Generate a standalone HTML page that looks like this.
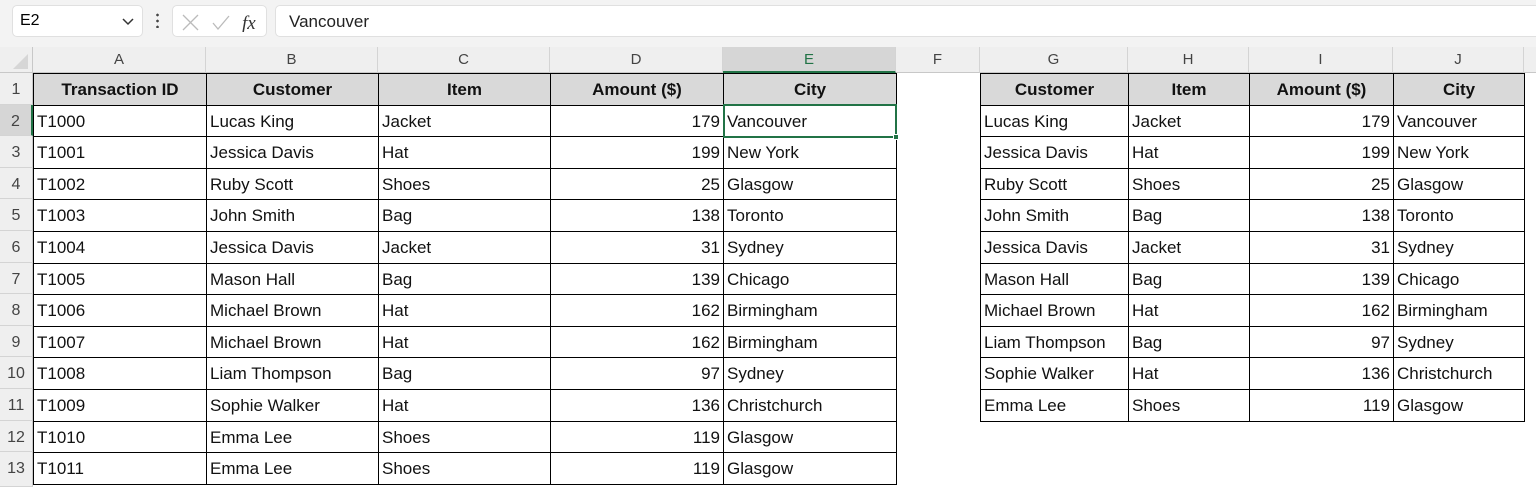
<!DOCTYPE html>
<html><head><meta charset="utf-8"><style>
*{margin:0;padding:0;box-sizing:border-box}
body{width:1536px;height:487px;overflow:hidden;background:#fff;font-family:"Liberation Sans",sans-serif;position:relative}
.top{position:absolute;left:0;top:0;width:1536px;height:47px;background:#f3f3f3}
.box{position:absolute;background:#fff;border:1px solid #e0e0e0;border-radius:5px}
.colh{position:absolute;top:47px;height:26px;background:#efefef;border-right:1px solid #d4d4d4;border-bottom:1px solid #c8c8c8;font-size:15px;color:#444;text-align:center;line-height:26px}
.rowh{position:absolute;left:0;width:33px;background:#efefef;border-bottom:1px solid #d4d4d4;border-right:1px solid #c8c8c8;font-size:16px;color:#444;text-align:center;padding-top:8px}
.t{position:absolute;top:73px;border-top:1px solid #000;border-left:1px solid #000}
.r{display:flex;height:31.6px}
.r div{border-right:1px solid #000;border-bottom:1px solid #000;font-size:17px;line-height:31px;padding:0 3px;white-space:nowrap;overflow:hidden;color:#111}
.r.h div{background:#d9d9d9;font-weight:bold;text-align:center}
.n{text-align:right}
</style></head><body>
<div class="top"></div>
<div class="box" style="left:12px;top:5px;width:131px;height:32px"><span style="position:absolute;left:7px;top:6px;font-size:16px">E2</span><svg style="position:absolute;left:109px;top:12px" width="12" height="8"><path d="M1 1l5 5 5-5" stroke="#333" fill="none" stroke-width="1.5"/></svg></div>
<div style="position:absolute;left:156px;top:12px;width:3px;height:16px;background:radial-gradient(circle,#444 1.2px,transparent 1.5px) 0 0/3px 6px"></div>
<div class="box" style="left:172px;top:5px;width:95px;height:32px"><svg style="position:absolute;left:8px;top:8px" width="80" height="18"><path d="M2 1l15 15M17 1L2 16" stroke="#bbb" stroke-width="1.3"/><path d="M32 9l5 6 11-13" stroke="#bbb" fill="none" stroke-width="1.3"/><text x="61" y="15" font-family="Liberation Serif" font-style="italic" font-size="19" fill="#333">fx</text></svg></div>
<div class="box" style="left:275px;top:5px;width:1270px;height:32px"><span style="position:absolute;left:13px;top:6px;font-size:17px;color:#222">Vancouver</span></div>
<div style="position:absolute;left:0;top:47px;width:33px;height:26px;background:#efefef;border-right:1px solid #c8c8c8;border-bottom:1px solid #c8c8c8"><svg width="33" height="26"><path d="M28 7v15H13z" fill="#d6d6d6"/></svg></div>
<div class="colh" style="left:33px;width:173px">A</div>
<div class="colh" style="left:206px;width:172px">B</div>
<div class="colh" style="left:378px;width:172px">C</div>
<div class="colh" style="left:550px;width:173px">D</div>
<div class="colh" style="left:723px;width:173px;background:#d6d6d6;color:#217346;border-bottom:2px solid #217346">E</div>
<div class="colh" style="left:896px;width:84px">F</div>
<div class="colh" style="left:980px;width:148px">G</div>
<div class="colh" style="left:1128px;width:121px">H</div>
<div class="colh" style="left:1249px;width:144px">I</div>
<div class="colh" style="left:1393px;width:131px">J</div>
<div class="colh" style="left:1524px;width:20px"></div>
<div class="rowh" style="top:73px;height:31.6px">1</div>
<div class="rowh" style="top:104.6px;height:31.6px;background:#d6d6d6;border-right:2px solid #217346">2</div>
<div class="rowh" style="top:136.2px;height:31.6px">3</div>
<div class="rowh" style="top:167.8px;height:31.6px">4</div>
<div class="rowh" style="top:199.4px;height:31.6px">5</div>
<div class="rowh" style="top:231px;height:31.6px">6</div>
<div class="rowh" style="top:262.6px;height:31.6px">7</div>
<div class="rowh" style="top:294.2px;height:31.6px">8</div>
<div class="rowh" style="top:325.8px;height:31.6px">9</div>
<div class="rowh" style="top:357.4px;height:31.6px">10</div>
<div class="rowh" style="top:389px;height:31.6px">11</div>
<div class="rowh" style="top:420.6px;height:31.6px">12</div>
<div class="rowh" style="top:452.2px;height:35px">13</div>

<div class="t" style="left:33px">
<div class="r h"><div style="width:173px">Transaction ID</div><div style="width:172px">Customer</div><div style="width:172px">Item</div><div style="width:173px">Amount ($)</div><div style="width:173px">City</div></div>
<div class="r"><div style="width:173px">T1000</div><div style="width:172px">Lucas King</div><div style="width:172px">Jacket</div><div class="n" style="width:173px">179</div><div style="width:173px">Vancouver</div></div>
<div class="r"><div style="width:173px">T1001</div><div style="width:172px">Jessica Davis</div><div style="width:172px">Hat</div><div class="n" style="width:173px">199</div><div style="width:173px">New York</div></div>
<div class="r"><div style="width:173px">T1002</div><div style="width:172px">Ruby Scott</div><div style="width:172px">Shoes</div><div class="n" style="width:173px">25</div><div style="width:173px">Glasgow</div></div>
<div class="r"><div style="width:173px">T1003</div><div style="width:172px">John Smith</div><div style="width:172px">Bag</div><div class="n" style="width:173px">138</div><div style="width:173px">Toronto</div></div>
<div class="r"><div style="width:173px">T1004</div><div style="width:172px">Jessica Davis</div><div style="width:172px">Jacket</div><div class="n" style="width:173px">31</div><div style="width:173px">Sydney</div></div>
<div class="r"><div style="width:173px">T1005</div><div style="width:172px">Mason Hall</div><div style="width:172px">Bag</div><div class="n" style="width:173px">139</div><div style="width:173px">Chicago</div></div>
<div class="r"><div style="width:173px">T1006</div><div style="width:172px">Michael Brown</div><div style="width:172px">Hat</div><div class="n" style="width:173px">162</div><div style="width:173px">Birmingham</div></div>
<div class="r"><div style="width:173px">T1007</div><div style="width:172px">Michael Brown</div><div style="width:172px">Hat</div><div class="n" style="width:173px">162</div><div style="width:173px">Birmingham</div></div>
<div class="r"><div style="width:173px">T1008</div><div style="width:172px">Liam Thompson</div><div style="width:172px">Bag</div><div class="n" style="width:173px">97</div><div style="width:173px">Sydney</div></div>
<div class="r"><div style="width:173px">T1009</div><div style="width:172px">Sophie Walker</div><div style="width:172px">Hat</div><div class="n" style="width:173px">136</div><div style="width:173px">Christchurch</div></div>
<div class="r"><div style="width:173px">T1010</div><div style="width:172px">Emma Lee</div><div style="width:172px">Shoes</div><div class="n" style="width:173px">119</div><div style="width:173px">Glasgow</div></div>
<div class="r"><div style="width:173px">T1011</div><div style="width:172px">Emma Lee</div><div style="width:172px">Shoes</div><div class="n" style="width:173px">119</div><div style="width:173px">Glasgow</div></div>
</div>

<div class="t" style="left:980px">
<div class="r h"><div style="width:148px">Customer</div><div style="width:121px">Item</div><div style="width:144px">Amount ($)</div><div style="width:131px">City</div></div>
<div class="r"><div style="width:148px">Lucas King</div><div style="width:121px">Jacket</div><div class="n" style="width:144px">179</div><div style="width:131px">Vancouver</div></div>
<div class="r"><div style="width:148px">Jessica Davis</div><div style="width:121px">Hat</div><div class="n" style="width:144px">199</div><div style="width:131px">New York</div></div>
<div class="r"><div style="width:148px">Ruby Scott</div><div style="width:121px">Shoes</div><div class="n" style="width:144px">25</div><div style="width:131px">Glasgow</div></div>
<div class="r"><div style="width:148px">John Smith</div><div style="width:121px">Bag</div><div class="n" style="width:144px">138</div><div style="width:131px">Toronto</div></div>
<div class="r"><div style="width:148px">Jessica Davis</div><div style="width:121px">Jacket</div><div class="n" style="width:144px">31</div><div style="width:131px">Sydney</div></div>
<div class="r"><div style="width:148px">Mason Hall</div><div style="width:121px">Bag</div><div class="n" style="width:144px">139</div><div style="width:131px">Chicago</div></div>
<div class="r"><div style="width:148px">Michael Brown</div><div style="width:121px">Hat</div><div class="n" style="width:144px">162</div><div style="width:131px">Birmingham</div></div>
<div class="r"><div style="width:148px">Liam Thompson</div><div style="width:121px">Bag</div><div class="n" style="width:144px">97</div><div style="width:131px">Sydney</div></div>
<div class="r"><div style="width:148px">Sophie Walker</div><div style="width:121px">Hat</div><div class="n" style="width:144px">136</div><div style="width:131px">Christchurch</div></div>
<div class="r"><div style="width:148px">Emma Lee</div><div style="width:121px">Shoes</div><div class="n" style="width:144px">119</div><div style="width:131px">Glasgow</div></div>
</div>

<div style="position:absolute;left:723px;top:104px;width:174px;height:34px;border:2px solid #217346"></div>
<div style="position:absolute;left:893px;top:134px;width:6px;height:6px;background:#217346;border:1px solid #fff"></div>
</body></html>
